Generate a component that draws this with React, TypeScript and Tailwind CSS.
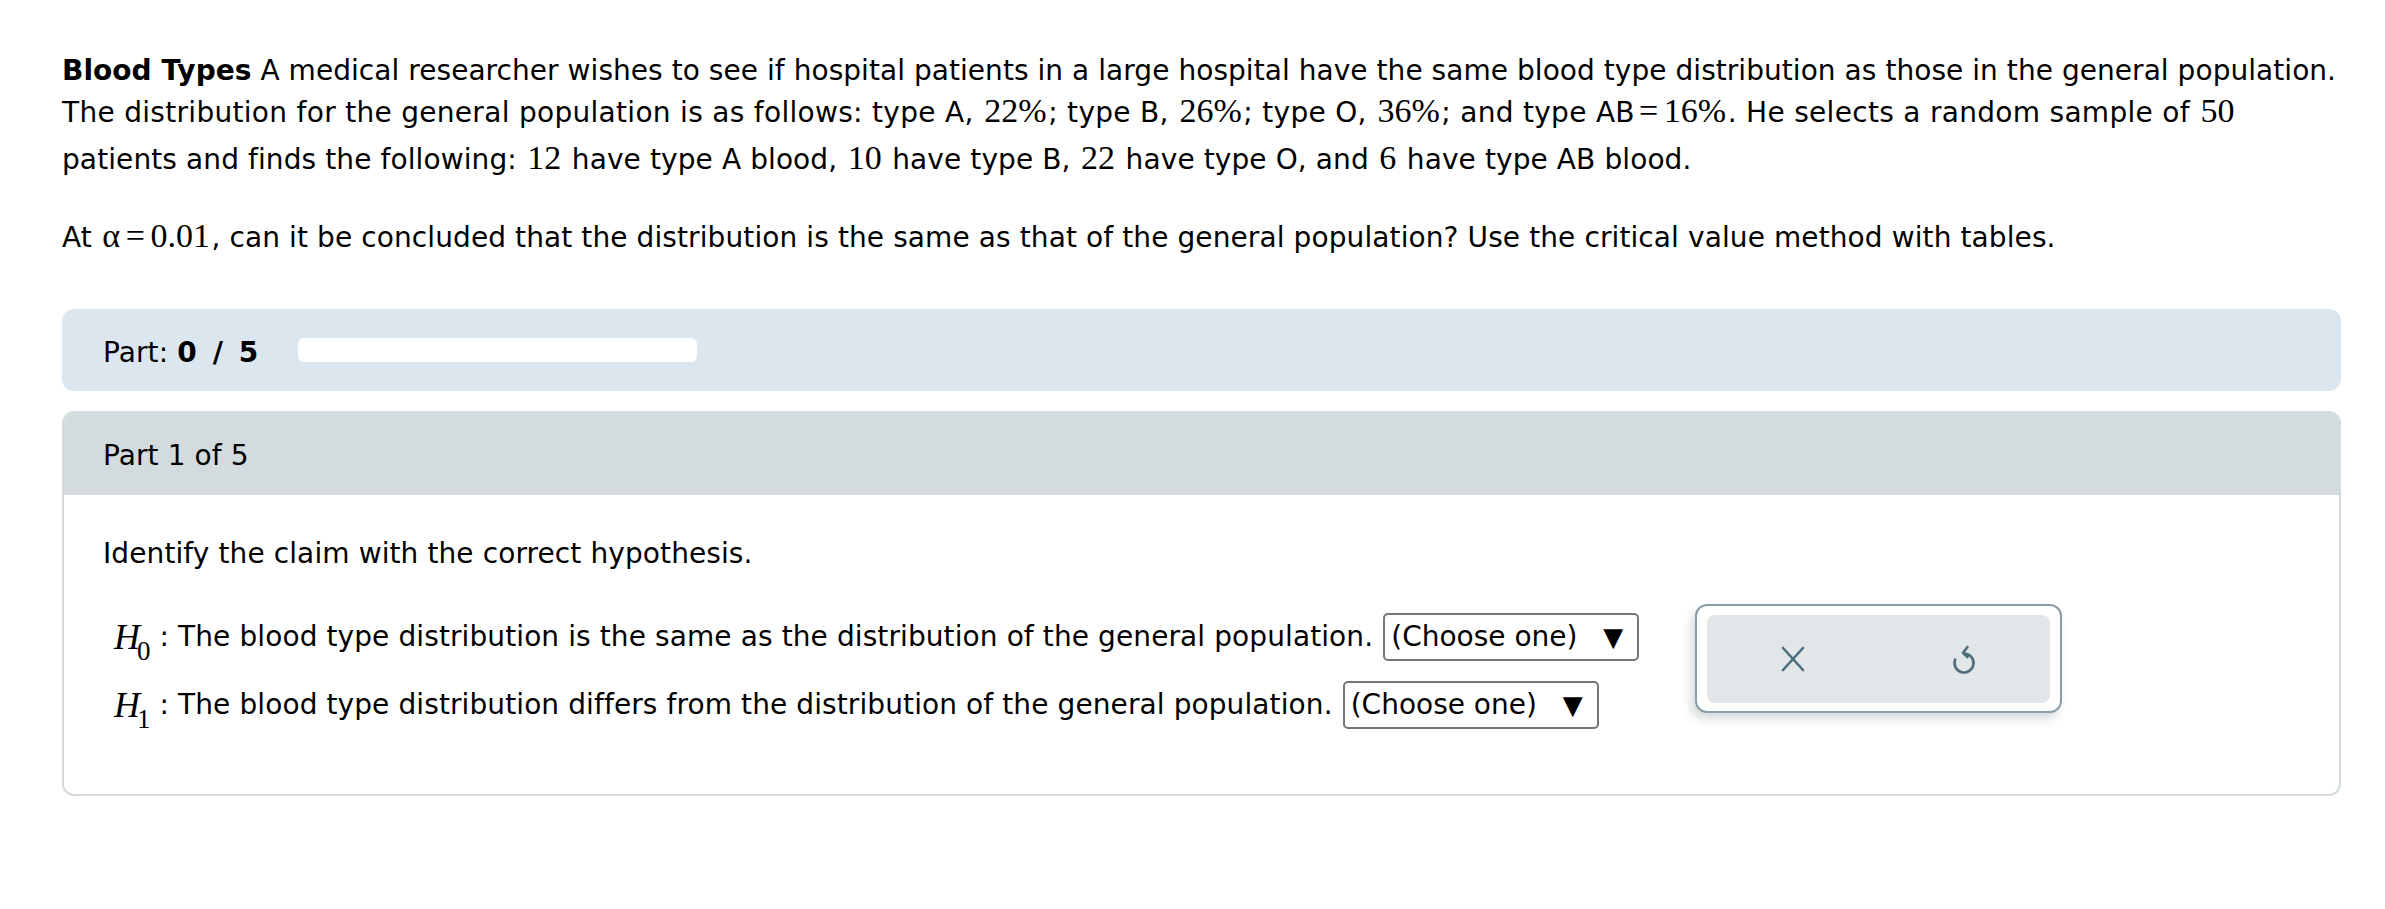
import React from "react";

function M({ children }: { children: React.ReactNode }) {
  return (
    <span className="font-['Liberation_Serif',serif] text-[34px] leading-none px-[1.5px] tracking-normal">
      {children}
    </span>
  );
}

function Eq() {
  return <span className="font-['Liberation_Serif',serif] text-[34px] leading-none mx-[4px]">=</span>;
}

function H({ sub }: { sub: string }) {
  return (
    <span className="font-['Liberation_Serif',serif] leading-none whitespace-nowrap tracking-normal">
      <span className="italic text-[36px]">H</span>
      <span className="text-[27px] relative top-[11px] ml-[-3px]">{sub}</span>
    </span>
  );
}

function Select() {
  return (
    <div className="ml-[10px] h-[48px] w-[256px] border-2 border-[#767676] rounded-[5px] flex items-center justify-between pl-[6px] pr-[14px] bg-white tracking-normal">
      <span className="leading-[42px]">(Choose one)</span>
      <span className="text-[26px] leading-none">▼</span>
    </div>
  );
}

function XIcon() {
  return (
    <svg width="26" height="28" viewBox="0 0 26 28" fill="none" stroke="#4e6e7b" strokeWidth="2.6" strokeLinecap="round">
      <path d="M3 3 L23 25" />
      <path d="M23 3 L3 25" />
    </svg>
  );
}

function UndoIcon() {
  return (
    <svg width="24" height="34" viewBox="0 0 24 34" fill="none" stroke="#4e6e7b" strokeWidth="2.6" strokeLinecap="round" strokeLinejoin="round">
      <path d="M3.2 17.5 A9.5 9.5 0 1 0 12 11.5" />
      <path d="M15.5 5 L11 10.8 L15.5 15" />
    </svg>
  );
}

export default function App() {
  return (
    <div className="w-[2385px] min-h-[909px] bg-white text-black font-['DejaVu_Sans',Verdana,sans-serif] text-[28px] tracking-[0.1px] pl-[62px] pr-[44px] pt-[50px]">
      <div>
        <div className="leading-[42px] whitespace-nowrap tracking-[0.05px]">
          <b>Blood Types</b> A medical researcher wishes to see if hospital patients in a large hospital have the same blood type distribution as those in the general population.
        </div>
        <div className="leading-[42px] whitespace-nowrap tracking-[0.3px]">
          The distribution for the general population is as follows: type A, <M>22%</M>; type B, <M>26%</M>; type O, <M>36%</M>; and type AB<Eq /><M>16%</M>. He selects a random sample of <M>50</M>
        </div>
        <div className="leading-[52px] whitespace-nowrap">
          patients and finds the following: <M>12</M> have type A blood, <M>10</M> have type B, <M>22</M> have type O, and <M>6</M> have type AB blood.
        </div>
      </div>

      <div className="mt-[31px] leading-[42px] whitespace-nowrap">
        At <M>α</M><Eq /><M>0.01</M>, can it be concluded that the distribution is the same as that of the general population? Use the critical value method with tables.
      </div>

      <div className="mt-[50px] h-[82px] rounded-[12px] bg-[#dce6ef] flex items-center pl-[41px] pt-[6px]">
        <span className="leading-[42px] whitespace-pre">
          Part: <b className="[word-spacing:6px]">0 / 5</b>
        </span>
        <div className="ml-[40px] w-[399px] h-[24px] rounded-[6px] bg-white mt-[-6px]" />
      </div>

      <div className="mt-[20px] rounded-[12px] border-2 border-[#d3dbdf] overflow-hidden">
        <div className="h-[82px] bg-[#d3dbdf] pl-[39px] pt-[22px]">
          <span className="leading-[42px]">Part 1 of 5</span>
        </div>
        <div className="pl-[39px] pt-[38px] pb-[65px]">
          <div className="leading-[42px]">Identify the claim with the correct hypothesis.</div>
          <div className="mt-[29px] flex items-start">
            <div className="pt-[9px] flex flex-col gap-[20px]">
              <div className="h-[48px] flex items-center pl-[11px]">
                <H sub="0" />
                <span className="leading-[42px] whitespace-nowrap">&nbsp;: The blood type distribution is the same as the distribution of the general population.</span>
                <Select />
              </div>
              <div className="h-[48px] flex items-center pl-[11px]">
                <H sub="1" />
                <span className="leading-[42px] whitespace-nowrap">&nbsp;: The blood type distribution differs from the distribution of the general population.</span>
                <Select />
              </div>
            </div>
            <div className="ml-[56px] w-[367px] h-[109px] border-2 border-[#8a9da7] rounded-[12px] bg-white pt-[9px] pb-[8px] px-[10px] shadow-[-4px_6px_10px_rgba(40,60,70,0.18)]">
              <div className="h-full rounded-[8px] bg-[#e1e6e9] flex">
                <button className="flex-1 flex items-center justify-center">
                  <XIcon />
                </button>
                <button className="flex-1 flex items-center justify-center">
                  <UndoIcon />
                </button>
              </div>
            </div>
          </div>
        </div>
      </div>
    </div>
  );
}
